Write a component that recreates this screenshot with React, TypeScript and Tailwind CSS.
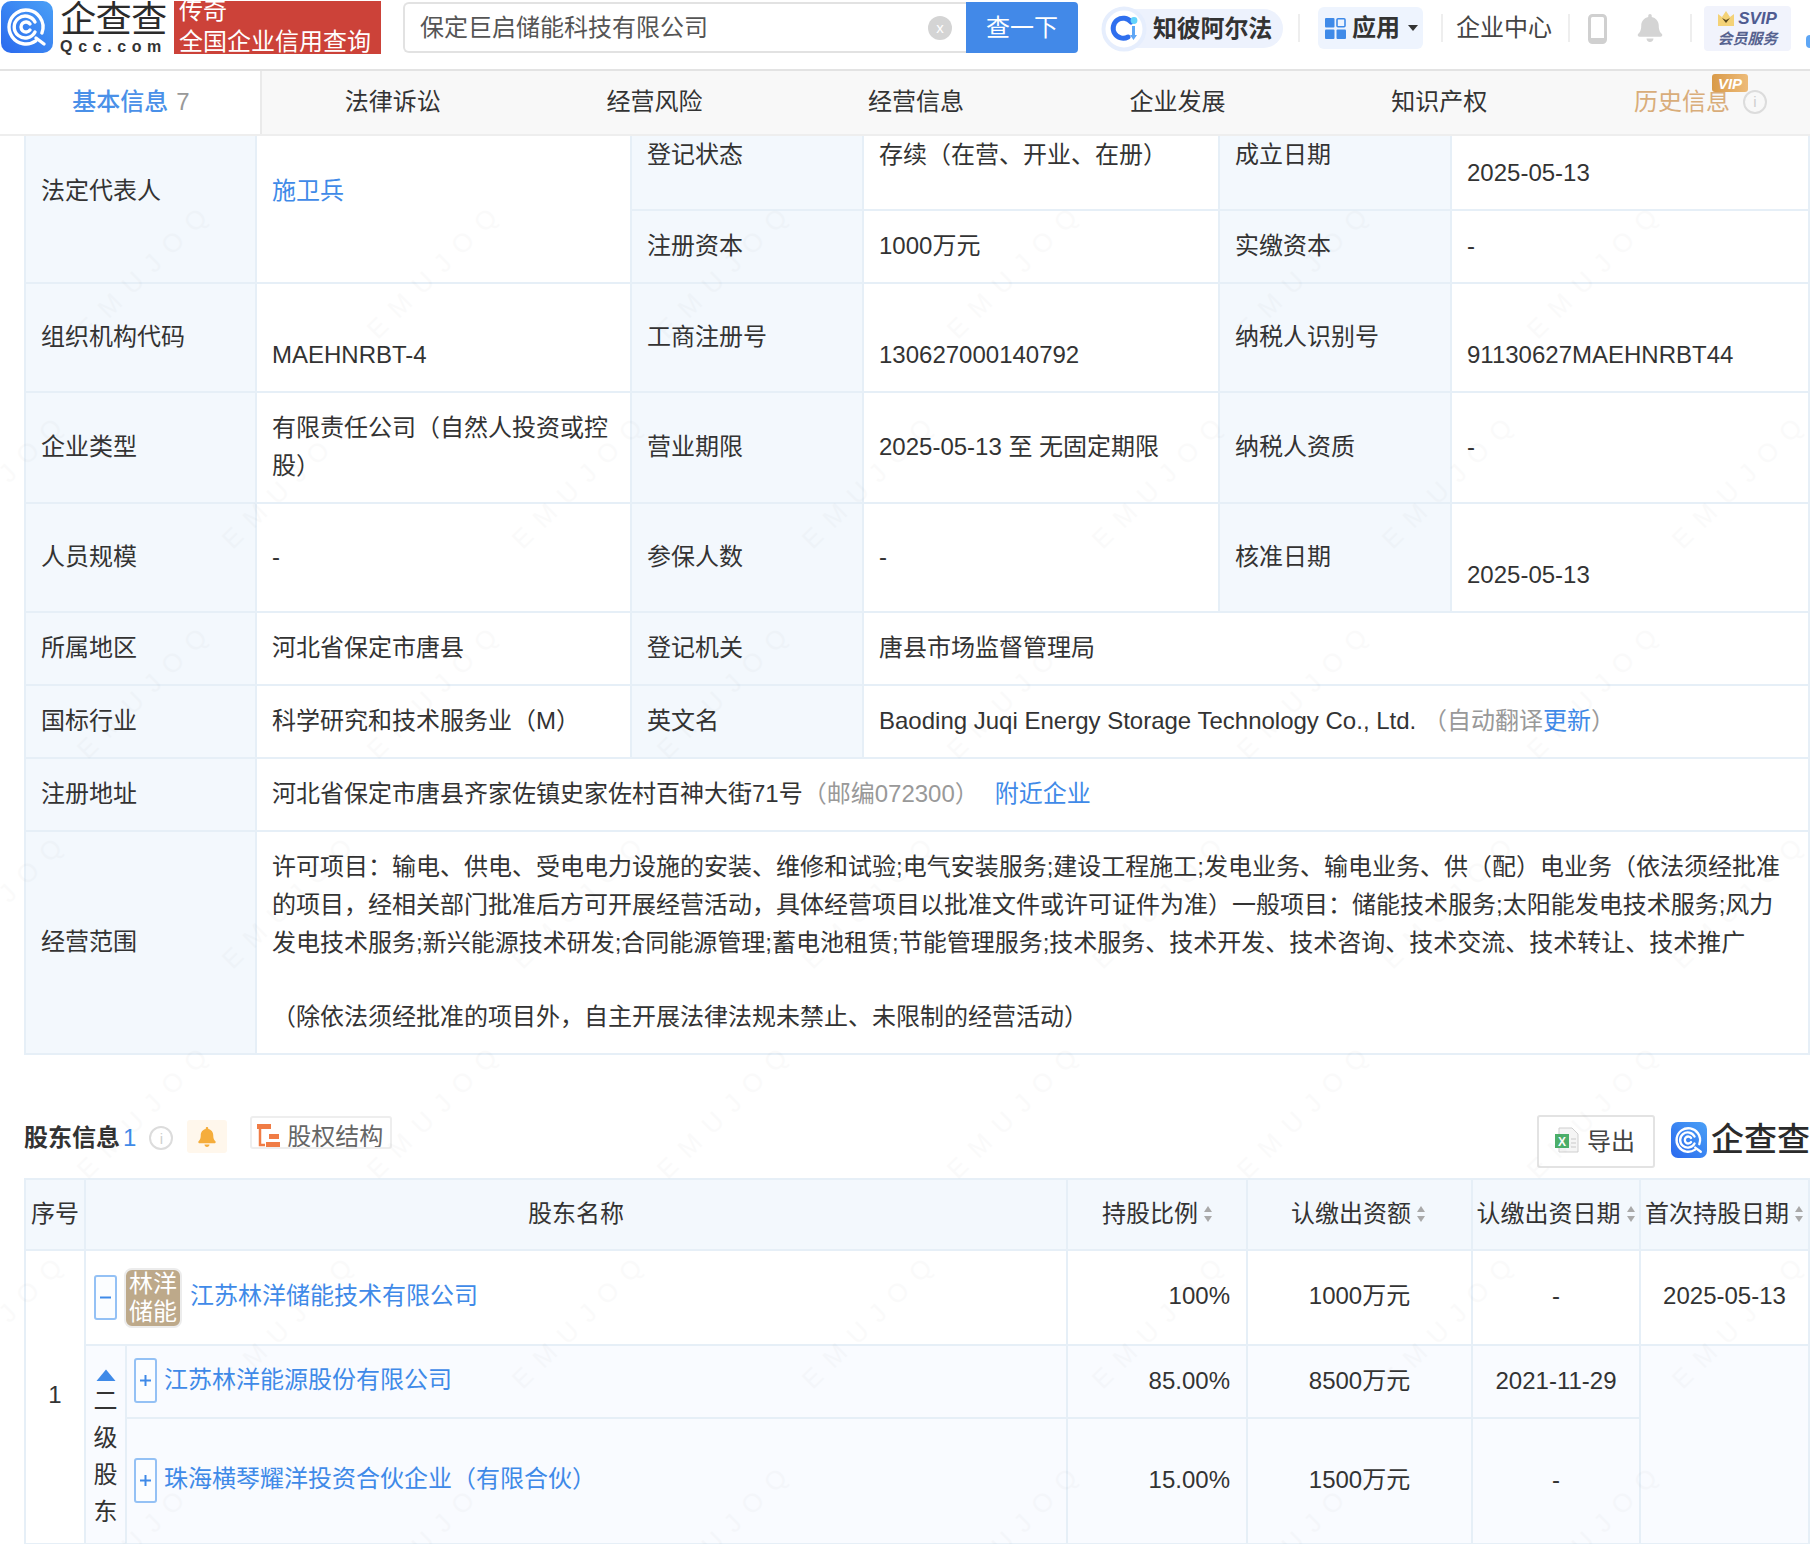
import { FaBell } from 'react-icons/fa';

const sans = "font-['Liberation_Sans','Noto_Sans_CJK_SC',sans-serif]";

function QccLogo({ size }: { size: number }) {
  return (
    <svg width={size} height={size} viewBox="0 0 52 52" className="shrink-0">
      <defs>
        <linearGradient id="qcc" x1="0" y1="1" x2="1" y2="0">
          <stop offset="0" stopColor="#2a69ee" />
          <stop offset="1" stopColor="#4aa0f6" />
        </linearGradient>
      </defs>
      <rect width="52" height="52" rx="10" fill="url(#qcc)" />
      <g fill="none" stroke="#fff" strokeWidth="3.4" strokeLinecap="round">
        <circle cx="25" cy="26" r="17" strokeDasharray="96 11" transform="rotate(55 25 26)" />
        <path d="M35 37l8 6" />
        <path d="M34 21a11 11 0 1 0 0 10" />
        <path d="M29 23a5 5 0 1 0 0 6" />
      </g>
    </svg>
  );
}

function InfoIcon() {
  return (
    <span className="flex h-[24px] w-[24px] shrink-0 items-center justify-center rounded-full border-2 border-[#dcdcdc] text-[15px] leading-none text-[#cfcfcf]">
      i
    </span>
  );
}

function SortIcon() {
  return (
    <svg width="10" height="18" viewBox="0 0 10 18" className="ml-[5px] inline-block shrink-0 align-[-1px]">
      <path d="M5 1l4 6H1z" fill="#a9a9a9" />
      <path d="M5 17l4-6H1z" fill="#a9a9a9" />
    </svg>
  );
}

function ToggleBox({ sign }: { sign: string }) {
  return (
    <span className="flex h-[45px] w-[23px] shrink-0 items-center justify-center rounded-[3px] border-2 border-[#94c1f5] bg-[#fbfdff]">
      <svg width="13" height="13" viewBox="0 0 13 13">
        <path d="M1 6.5h11" stroke="#3f8ae8" strokeWidth="2" />
        {sign === '+' && <path d="M6.5 1v11" stroke="#3f8ae8" strokeWidth="2" />}
      </svg>
    </span>
  );
}

const label = 'border-2 border-[#e6eff7] bg-[#f3f8fd] pl-[15px] pr-4 text-left align-middle font-normal text-[#333]';
const value = 'border-2 border-[#e6eff7] pl-[15px] pr-4 align-middle text-[#333]';
const L = `${label} pb-[2px]`;
const V = `${value} pb-[2px]`;
const link = 'text-[#3f8ae8]';

function InfoTable() {
  return (
    <table className="ml-6 w-[1784px] table-fixed border-collapse text-[24px] leading-[38px]">
      <colgroup>
        <col className="w-[231px]" />
        <col className="w-[375px]" />
        <col className="w-[232px]" />
        <col className="w-[356px]" />
        <col className="w-[232px]" />
        <col className="w-[358px]" />
      </colgroup>
      <tbody>
        <tr className="h-[73px]">
          <th rowSpan={2} className={`${label} border-t-0 pb-[37px]`}>法定代表人</th>
          <td rowSpan={2} className={`${value} border-t-0 pb-[37px]`}><span className={link}>施卫兵</span></td>
          <th className={`${label} border-t-0 pb-[35px]`}>登记状态</th>
          <td className={`${value} border-t-0 pb-[35px]`}>存续（在营、开业、在册）</td>
          <th className={`${label} border-t-0 pb-[35px]`}>成立日期</th>
          <td className={`${value} border-t-0`}>2025-05-13</td>
        </tr>
        <tr className="h-[73px]">
          <th className={L}>注册资本</th>
          <td className={V}>1000万元</td>
          <th className={L}>实缴资本</th>
          <td className={V}>-</td>
        </tr>
        <tr className="h-[109px]">
          <th className={L}>组织机构代码</th>
          <td className={`${value} pt-[34px]`}>MAEHNRBT-4</td>
          <th className={L}>工商注册号</th>
          <td className={`${value} pt-[34px]`}>130627000140792</td>
          <th className={L}>纳税人识别号</th>
          <td className={`${value} pt-[34px]`}>91130627MAEHNRBT44</td>
        </tr>
        <tr className="h-[111px]">
          <th className={L}>企业类型</th>
          <td className={V}>有限责任公司（自然人投资或控股）</td>
          <th className={L}>营业期限</th>
          <td className={V}>2025-05-13 至 无固定期限</td>
          <th className={L}>纳税人资质</th>
          <td className={V}>-</td>
        </tr>
        <tr className="h-[109px]">
          <th className={L}>人员规模</th>
          <td className={V}>-</td>
          <th className={L}>参保人数</th>
          <td className={V}>-</td>
          <th className={L}>核准日期</th>
          <td className={`${value} pt-[34px]`}>2025-05-13</td>
        </tr>
        <tr className="h-[73px]">
          <th className={L}>所属地区</th>
          <td className={V}>河北省保定市唐县</td>
          <th className={L}>登记机关</th>
          <td colSpan={3} className={V}>唐县市场监督管理局</td>
        </tr>
        <tr className="h-[73px]">
          <th className={L}>国标行业</th>
          <td className={V}>科学研究和技术服务业（M）</td>
          <th className={L}>英文名</th>
          <td colSpan={3} className={V}>
            Baoding Juqi Energy Storage Technology Co., Ltd. <span className="text-[#999]">（自动翻译<span className={link}>更新</span>）</span>
          </td>
        </tr>
        <tr className="h-[73px]">
          <th className={L}>注册地址</th>
          <td colSpan={5} className={V}>
            河北省保定市唐县齐家佐镇史家佐村百神大街71号<span className="text-[#999]">（邮编072300）</span>
            <span className={`${link} ml-[16px]`}>附近企业</span>
          </td>
        </tr>
        <tr className="h-[223px]">
          <th className={L}>经营范围</th>
          <td colSpan={5} className={`${V} whitespace-nowrap`}>
            <div>许可项目：输电、供电、受电电力设施的安装、维修和试验;电气安装服务;建设工程施工;发电业务、输电业务、供（配）电业务（依法须经批准</div>
            <div>的项目，经相关部门批准后方可开展经营活动，具体经营项目以批准文件或许可证件为准）一般项目：储能技术服务;太阳能发电技术服务;风力</div>
            <div>发电技术服务;新兴能源技术研发;合同能源管理;蓄电池租赁;节能管理服务;技术服务、技术开发、技术咨询、技术交流、技术转让、技术推广</div>
            <div className="mt-[36px]">（除依法须经批准的项目外，自主开展法律法规未禁止、未限制的经营活动）</div>
          </td>
        </tr>
      </tbody>
    </table>
  );
}

function HolderTable() {
  const th = 'border-2 border-[#e6eff7] bg-[#f3f8fd] pb-[2px] font-normal text-[#333]';
  const td = 'border-2 border-[#e6eff7] pb-[3px] text-center text-[#333]';
  const sub = 'border-2 border-[#e6eff7] bg-[#f9fbff] pb-[2px] text-center text-[#333]';
  return (
    <table className="ml-6 mt-[10px] w-[1784px] table-fixed border-collapse text-[24px] leading-[36px]">
      <colgroup>
        <col className="w-[60px]" />
        <col className="w-[41px]" />
        <col className="w-[941px]" />
        <col className="w-[180px]" />
        <col className="w-[225px]" />
        <col className="w-[168px]" />
        <col className="w-[169px]" />
      </colgroup>
      <thead>
        <tr className="h-[71px]">
          <th className={th}>序号</th>
          <th colSpan={2} className={th}>股东名称</th>
          <th className={`${th} whitespace-nowrap pr-[33px] text-right`}>持股比例<SortIcon /></th>
          <th className={`${th} whitespace-nowrap pr-[2px] text-center`}>认缴出资额<SortIcon /></th>
          <th className={`${th} whitespace-nowrap text-center`}>认缴出资日期<SortIcon /></th>
          <th className={`${th} whitespace-nowrap text-center`}>首次持股日期<SortIcon /></th>
        </tr>
      </thead>
      <tbody>
        <tr className="h-[95px]">
          <td rowSpan={3} className={`${td} pb-[5px]`}>1</td>
          <td colSpan={2} className="border-2 border-[#e6eff7] px-2">
            <div className="flex items-center">
              <ToggleBox sign="-" />
              <span className="ml-[7px] flex h-[60px] w-[58px] shrink-0 items-center justify-center rounded-[8px] border-2 border-[#ececec] bg-[#bda98a] text-center text-[24px] leading-[28px] text-white">
                林洋<br />储能
              </span>
              <span className={`${link} ml-[8px] -mt-[3px]`}>江苏林洋储能技术有限公司</span>
            </div>
          </td>
          <td className={`${td} pr-4 text-right`}>100%</td>
          <td className={td}>1000万元</td>
          <td className={td}>-</td>
          <td className={td}>2025-05-13</td>
        </tr>
        <tr className="h-[73px]">
          <td rowSpan={2} className={`${sub} pt-[23px] align-top`}>
            <div className="flex flex-col items-center leading-[37px]">
              <svg width="20" height="12" viewBox="0 0 20 12"><path d="M10 0.5l9.5 11.5H0.5z" fill="#3f8ae8" /></svg>
              <span className="mt-[1px]">二</span>
              <span>级</span>
              <span>股</span>
              <span>东</span>
            </div>
          </td>
          <td className={`${sub} pl-[7px] pr-2`}>
            <div className="flex items-center">
              <ToggleBox sign="+" />
              <span className={`${link} ml-[7px] -mt-[2px]`}>江苏林洋能源股份有限公司</span>
            </div>
          </td>
          <td className={`${sub} pr-4 text-right`}>85.00%</td>
          <td className={sub}>8500万元</td>
          <td className={sub}>2021-11-29</td>
          <td rowSpan={2} className={sub}></td>
        </tr>
        <tr className="h-[126px]">
          <td className={`${sub} pl-[7px] pr-2`}>
            <div className="flex items-center">
              <ToggleBox sign="+" />
              <span className={`${link} ml-[7px] -mt-[2px]`}>珠海横琴耀洋投资合伙企业（有限合伙）</span>
            </div>
          </td>
          <td className={`${sub} pr-4 text-right`}>15.00%</td>
          <td className={sub}>1500万元</td>
          <td className={sub}>-</td>
        </tr>
      </tbody>
    </table>
  );
}

function Header() {
  return (
    <header className="relative z-10 flex h-[71px] items-start overflow-hidden whitespace-nowrap border-b-2 border-[#e3e3e3] bg-white *:shrink-0">
      <div className="ml-[1px] mt-[1px] flex w-[166px] items-start">
        <QccLogo size={52} />
        <div className="ml-[8px] flex w-[105px] flex-col items-center">
          <span className="text-[36px] leading-[38px] tracking-[-0.5px] text-[#2b2b2b]">企查查</span>
          <span className="text-[16px] font-bold leading-[16px] tracking-[5.6px] text-[#333]">Qcc.com</span>
        </div>
      </div>
      <div className="ml-[7px] mt-[1px] h-[53px] w-[207px] overflow-hidden bg-[#cc4239] pl-[5px] text-[24px] leading-[28px] text-white">
        <div className="-mt-[4px]">传奇</div>
        <div className="mt-[3px]">全国企业信用查询</div>
      </div>
      <div className="ml-[22px] mt-[2px] flex h-[51px] w-[563px] items-center justify-between rounded-l-[6px] border-2 border-r-0 border-[#e2e2e2] pl-[15px] pr-[14px] text-[24px] text-[#555]">
        <span>保定巨启储能科技有限公司</span>
        <span className="flex h-[24px] w-[24px] items-center justify-center rounded-full bg-[#d4d4d4] text-[15px] leading-none text-white">x</span>
      </div>
      <button className="mt-[2px] h-[51px] w-[112px] rounded-r-[4px] bg-[#4289e8] text-[24px] text-white">查一下</button>
      <div className="ml-[25px] mt-[9px] flex h-[39px] w-[180px] items-center rounded-full bg-[#edf2fd]">
        <svg width="46" height="46" viewBox="0 0 46 46" className="-ml-[2px] shrink-0">
          <circle cx="23" cy="23" r="20.5" fill="#fff" stroke="#e6eefd" strokeWidth="4" />
          <path d="M30 16a10 10 0 1 0 -3 15" fill="none" stroke="#2f6fee" strokeWidth="5" strokeLinecap="round" />
          <circle cx="33" cy="14.5" r="3.4" fill="#62d3fb" />
          <path d="M31 20v9h-2l3.5 5 3.5-5h-2v-9z" fill="#5ea6f5" />
        </svg>
        <span className="ml-[6px] text-[24px] font-bold tracking-[-0.2px] text-[#333]">知彼阿尔法</span>
      </div>
      <span className="ml-[15px] mt-[14px] h-[28px] w-[2px] bg-[#eeeeee]" />
      <div className="ml-[18px] mt-[7px] flex h-[42px] w-[105px] items-center rounded-[6px] bg-[#eef4fe] pl-[7px]">
        <svg width="21" height="21" viewBox="0 0 21 21" className="shrink-0">
          <rect x="0" y="0" width="9.5" height="9.5" rx="1" fill="#3f8ae8" />
          <rect x="12" y="0.8" width="8" height="8" rx="1" fill="none" stroke="#3f8ae8" strokeWidth="1.6" />
          <rect x="0" y="11.5" width="9.5" height="9.5" rx="1" fill="#3f8ae8" />
          <rect x="11.5" y="11.5" width="9.5" height="9.5" rx="1" fill="#3f8ae8" />
        </svg>
        <span className="ml-[6px] text-[24px] font-bold text-[#333]">应用</span>
        <svg width="10" height="6" viewBox="0 0 10 6" className="ml-[8px] shrink-0"><path d="M0 0h10L5 6z" fill="#333" /></svg>
      </div>
      <span className="ml-[18px] mt-[14px] h-[28px] w-[2px] bg-[#eeeeee]" />
      <span className="ml-[13px] mt-[10px] text-[24px] leading-[36px] text-[#444]">企业中心</span>
      <span className="ml-[16px] mt-[14px] h-[28px] w-[2px] bg-[#eeeeee]" />
      <svg width="19" height="30" viewBox="0 0 19 30" className="ml-[18px] mt-[14px]">
        <rect x="1.5" y="1.5" width="16" height="27" rx="3" fill="#fff" stroke="#d0d0d0" strokeWidth="3" />
        <rect x="2" y="24" width="15" height="4.5" fill="#d0d0d0" />
      </svg>
      <FaBell className="ml-[29px] mt-[14px] text-[28px] text-[#d4d4d4]" />
      <span className="ml-[26px] mt-[14px] h-[28px] w-[2px] bg-[#eeeeee]" />
      <div className="ml-[12px] mt-[6px] flex h-[45px] w-[87px] flex-col items-center rounded-[4px] bg-[#f1f3fc]">
        <div className="flex h-[24px] items-center">
          <svg width="16" height="15" viewBox="0 0 16 15" className="shrink-0">
            <path d="M0 3l4 3 4-6 4 6 4-3v12H0z" fill="#f4d277" />
            <path d="M4 7l4 5 4-5-4 2z" fill="#5b4a1f" />
          </svg>
          <span className="ml-[4px] text-[17px] font-bold italic leading-none text-[#4f5b91]">SVIP</span>
        </div>
        <span className="text-[15px] font-bold italic leading-[18px] text-[#56628f]">会员服务</span>
      </div>
      <span className="ml-[15px] mt-[35px] h-[13px] w-[6px] rounded-l-[4px] bg-[#5ea6f5]" />
    </header>
  );
}

function Tabs() {
  const names = ['法律诉讼', '经营风险', '经营信息', '企业发展', '知识产权'];
  return (
    <nav className="relative z-10 flex h-[65px] overflow-hidden border-b-2 border-[#eeeeee] bg-[#f8f8f8] text-[24px] text-[#333]">
      <div className="flex w-[262px] shrink-0 items-center justify-center border-r-2 border-[#eaeaea] bg-white pb-[2px] pl-[2px]">
        <span className="font-medium text-[#4a90e8]">基本信息</span>
        <span className="ml-2 text-[#999]">7</span>
      </div>
      {names.map((n) => (
        <div key={n} className="flex w-[261.6px] shrink-0 items-center justify-center pb-[2px]">{n}</div>
      ))}
      <div className="relative ml-[64px] flex items-center pb-[2px] text-[#d9ad7a]">
        <span className="w-[96px] shrink-0">历史信息</span>
        <span className="ml-[13px]"><InfoIcon /></span>
        <span className="absolute left-[78px] top-[3px] flex h-[18px] w-[36px] items-center justify-center rounded-[3px] bg-gradient-to-r from-[#d99a48] to-[#edbb78] text-[15px] font-bold italic leading-none text-white">VIP</span>
      </div>
    </nav>
  );
}

function Watermark() {
  const marks = [];
  for (let r = 0; r < 8; r++) {
    for (let c = 0; c < 7; c++) {
      marks.push(
        <span
          key={`${r}-${c}`}
          className="absolute -rotate-45 whitespace-nowrap text-[26px] tracking-[12px] text-[#000] opacity-[0.015]"
          style={{ left: c * 290 - 90 + (r % 2) * 145, top: r * 210 + 40 }}
        >
          EMUJOQ
        </span>
      );
    }
  }
  return <div className="pointer-events-none absolute inset-0 overflow-hidden">{marks}</div>;
}

export default function App() {
  return (
    <div className={`relative h-[1544px] w-[1810px] overflow-hidden bg-white ${sans}`}>
      <Header />
      <Tabs />
      <InfoTable />
      <div className="ml-6 mt-[60px] flex h-[53px] w-[1786px] items-start">
        <div className="mt-[5px] flex items-center text-[24px] leading-[36px]">
          <span className="font-bold text-[#333]">股东信息</span>
          <span className="ml-[3px] font-medium text-[#3f8ae8]">1</span>
          <span className="ml-[13px]"><InfoIcon /></span>
        </div>
        <div className="ml-[14px] mt-[5px] flex h-[33px] w-[40px] items-center justify-center rounded-[3px] bg-[#fff7ec]">
          <FaBell className="text-[20px] text-[#f5ad3c]" />
        </div>
        <div className="ml-[23px] mt-[1px] flex h-[33px] w-[142px] items-start overflow-hidden rounded-[3px] border-2 border-[#eeeeee] pl-[5px] text-[24px] leading-[36px] text-[#666]">
          <svg width="24" height="24" viewBox="0 0 24 24" className="mt-[5px] shrink-0">
            <rect x="0" y="1" width="14" height="5" fill="#f07c45" />
            <path d="M3 6v16h5" fill="none" stroke="#f07c45" strokeWidth="2.5" />
            <rect x="12" y="11" width="10" height="5" fill="#f07c45" />
            <rect x="9" y="19" width="14" height="5" fill="#f07c45" />
          </svg>
          <span className="ml-[6px] mt-[1px] whitespace-nowrap">股权结构</span>
        </div>
        <div className="ml-auto flex items-center">
          <div className="flex h-[53px] w-[118px] items-center rounded-[3px] border-2 border-[#e3e3e3] pl-[16px] text-[24px] text-[#444]">
            <svg width="24" height="26" viewBox="0 0 24 26" className="-mt-[3px] shrink-0">
              <path d="M4 1h13l6 6v18H4z" fill="#f5f5f5" stroke="#cfcfcf" strokeWidth="1" />
              <path d="M16 12h5M16 16h5M16 20h5" stroke="#c9c9c9" strokeWidth="1.2" />
              <rect x="0" y="7" width="14" height="14" fill="#4caf6a" />
              <text x="7" y="18.5" textAnchor="middle" fontSize="12" fontWeight="700" fill="#fff">X</text>
            </svg>
            <span className="ml-[8px]">导出</span>
          </div>
          <div className="ml-[16px] mt-[-4px]"><QccLogo size={36} /></div>
          <span className="ml-[4px] mt-[-4px] w-[99px] whitespace-nowrap text-[33px] font-medium leading-[40px] text-[#2b2b2b]">企查查</span>
        </div>
      </div>
      <HolderTable />
      <Watermark />
    </div>
  );
}
